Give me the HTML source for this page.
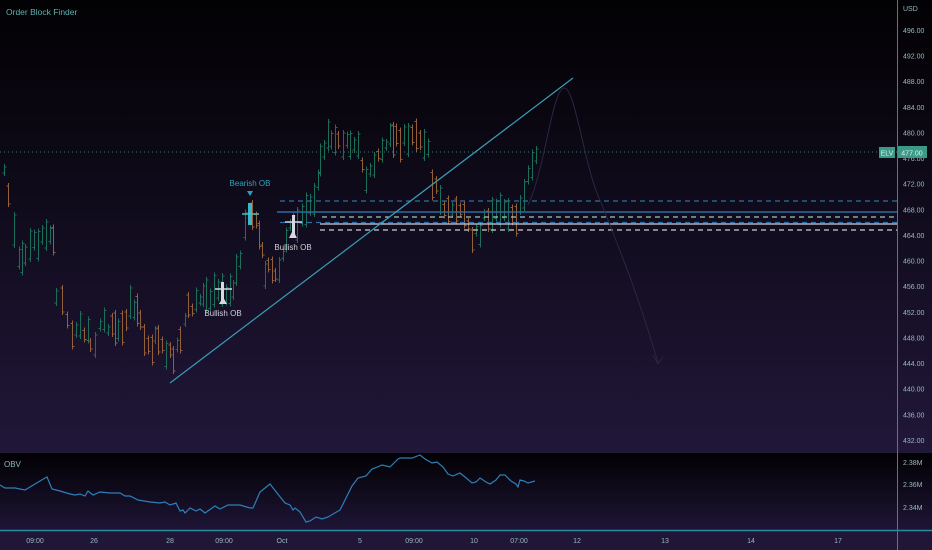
<!DOCTYPE html>
<html><head><meta charset="utf-8"><style>
html,body{margin:0;padding:0;width:932px;height:550px;overflow:hidden;background:#1f1638;font-family:"Liberation Sans",sans-serif}
svg{display:block}
</style></head><body>
<svg id="s" width="932" height="550" xmlns="http://www.w3.org/2000/svg">
<defs>
<linearGradient id="g1" x1="0" y1="0" x2="0" y2="1"><stop offset="0" stop-color="#020103"/><stop offset="1" stop-color="#211739"/></linearGradient>
<linearGradient id="g2" x1="0" y1="0" x2="0" y2="1"><stop offset="0" stop-color="#020103"/><stop offset="1" stop-color="#1e1536"/></linearGradient>
</defs>
<rect x="0" y="0" width="932" height="453" fill="url(#g1)"/>
<rect x="0" y="453" width="932" height="77" fill="url(#g2)"/>
<rect x="0" y="530" width="932" height="20" fill="#1f1638"/>
<line x1="0" y1="530.5" x2="932" y2="530.5" stroke="#2b8aa0" stroke-width="1.5"/>
<line x1="897.5" y1="0" x2="897.5" y2="550" stroke="#2b8aa0" stroke-width="1"/>
<text x="6" y="15" fill="#5fb3b0" font-size="8.5">Order Block Finder</text>
<text x="903" y="11" fill="#9ab8c0" font-size="7">USD</text>
<g id="axis" fill="#9ab8c0" font-size="7"></g>
<line x1="0" y1="152" x2="897" y2="152" stroke="#2a8a70" stroke-width="1" stroke-dasharray="1,3"/>
<g id="bars"></g>
<!-- zones -->
<line x1="280" y1="201" x2="897" y2="201" stroke="#2a6fa8" stroke-width="1.3" stroke-dasharray="5,4"/>
<line x1="277" y1="212" x2="897" y2="212" stroke="#2e6aa0" stroke-width="1.5"/>
<line x1="322" y1="217" x2="897" y2="217" stroke="#9ac8c0" stroke-width="1.2" stroke-dasharray="5,4"/>
<line x1="280" y1="222.5" x2="897" y2="222.5" stroke="#2a6fa8" stroke-width="1.2" stroke-dasharray="5,4"/>
<line x1="320" y1="224" x2="897" y2="224" stroke="#d0d0d8" stroke-width="1.3"/>
<line x1="320" y1="230" x2="897" y2="230" stroke="#c8d0d0" stroke-width="1.2" stroke-dasharray="5,4"/>
<line x1="170" y1="383" x2="573" y2="78" stroke="#3a9db8" stroke-width="1.2"/>
<path d="M528 205 C545 170,552 90,564 88 C575 86,585 170,600 200 C620 250,640 300,658 363 M653 355 L658 364 L663 357" fill="none" stroke="#2a2646" stroke-width="1"/>
<!-- OB markers -->
<text x="250" y="186" fill="#2aa3c0" font-size="8" text-anchor="middle">Bearish OB</text>
<path d="M247 191 L253 191 L250 196Z" fill="#2aa3c0"/>
<rect x="248" y="203" width="4" height="22" fill="#3ab8c8"/>
<line x1="242" y1="214" x2="259" y2="214" stroke="#4ac0c8" stroke-width="1.5"/>
<g fill="#d8d8e0" stroke="#d8d8e0">
<rect x="221" y="282" width="3" height="19" stroke="none"/>
<line x1="215" y1="289" x2="232" y2="289" stroke-width="1.5"/>
<path d="M219 304 L223 297 L227 304Z" stroke="none"/>
<rect x="292" y="215" width="3" height="19" stroke="none"/>
<line x1="285" y1="222" x2="302" y2="222" stroke-width="1.5"/>
<path d="M289 238 L293 230 L297 238Z" stroke="none"/>
</g>
<text x="223" y="316" fill="#d0d0d8" font-size="8" text-anchor="middle">Bullish OB</text>
<text x="293" y="250" fill="#d0d0d8" font-size="8" text-anchor="middle">Bullish OB</text>
<!-- price label -->
<rect x="879" y="147" width="16" height="11" fill="#3a9a88"/>
<text x="887" y="155.5" fill="#e0f0ea" font-size="7" text-anchor="middle">ELV</text>
<rect x="898" y="146" width="29" height="12" fill="#3a9a88"/>
<text x="912" y="155.5" fill="#e0f0ea" font-size="7" text-anchor="middle">477.00</text>
<!-- OBV -->
<text x="4" y="467" fill="#8ab8c0" font-size="8">OBV</text>
<text x="903" y="465" fill="#9ab8c0" font-size="7">2.38M</text>
<text x="903" y="487" fill="#9ab8c0" font-size="7">2.36M</text>
<text x="903" y="510" fill="#9ab8c0" font-size="7">2.34M</text>
<polyline fill="none" stroke="#2d7fb8" stroke-width="1.2" points="0,485 5,488 15,488 25,490 30,487 45,478 47,477 52,489 60,491 70,494 75,495 80,494 85,496 88,491 93,495 100,492 110,493 120,493 125,496 130,496 138,500 150,502 160,503 165,502 170,505 176,503 180,511 183,510 185,513 190,508 196,511 200,509 205,513 215,506 220,509 228,505 240,505 250,508 253,508 260,492 265,488 270,484 277,493 285,503 290,505 293,510 295,508 300,512 306,522 310,521 316,517 322,519 328,517 340,510 345,500 352,486 358,478 366,476 372,469 375,468 382,465 390,467 398,459 400,458 412,458 420,455 425,459 432,463 437,462 443,467 448,474 453,476 460,473 465,477 472,483 476,482 480,478 486,482 490,484 496,480 500,475 505,475 511,481 516,484 518,487 520,480 524,481 528,483 535,481"/>
<g fill="#9ab8c0" font-size="7" text-anchor="middle">
<text x="35" y="543">09:00</text><text x="94" y="543">26</text><text x="170" y="543">28</text><text x="224" y="543">09:00</text><text x="282" y="543">Oct</text><text x="360" y="543">5</text><text x="414" y="543">09:00</text><text x="474" y="543">10</text><text x="519" y="543">07:00</text><text x="577" y="543">12</text><text x="665" y="543">13</text><text x="751" y="543">14</text><text x="838" y="543">17</text>
</g>
</svg>
<script>
var ns="http://www.w3.org/2000/svg";
var ax=document.getElementById('axis');
for(var p=496;p>=432;p-=4){var y=30+(496-p)*6.406;if(Math.abs(y-152)<6)continue;var t=document.createElementNS(ns,'text');t.setAttribute('x',903);t.setAttribute('y',y+3);t.textContent=p.toFixed(2);ax.appendChild(t);}
var d="4:170g,8:195o,14:230g,19:258g,22:258g,25:255g,30:245g,34:240g,38:245g,42:235g,46:235g,50:235g,53:240o,56:297g,62:300o,67:320o,72:335o,76:330g,80:325g,84:335o,88:330g,90:345o,95:345g,100:325g,104:320g,108:330g,112:325o,115:328o,118:330g,122:328o,126:320o,130:302g,134:310g,137:310o,140:320o,144:340o,148:345o,152:350o,155:335g,158:340o,162:345o,166:355g,170:350o,173:360o,177:345g,180:340o,185:320g,188:305o,192:310o,196:300g,200:300g,203:295g,206:295g,210:300g,214:290g,218:290g,222:290g,226:295g,230:290g,233:290g,236:270g,240:260g,245:225g,249:212g,252:215o,256:220o,259:235o,262:250o,265:275g,268:265o,272:270o,275:275o,279:270g,283:255g,286:240g,290:225g,293:225g,297:225g,302:215g,306:210g,310:205g,314:200g,318:180g,320:160g,324:150g,328:135g,331:140g,335:140g,338:140o,343:145g,347:140g,350:145g,354:145g,358:145g,362:165o,366:180g,370:170g,374:165g,378:155o,382:150g,386:145g,390:135g,393:140o,396:135o,400:145o,404:135g,408:140g,412:135o,416:135o,420:140o,424:145g,428:148g,432:185o,436:185o,440:200g,444:210o,448:210o,452:210g,456:210o,460:210o,464:215o,468:225o,472:240o,476:230g,480:235g,484:215g,488:220o,492:215g,496:210g,500:210g,504:210g,508:215g,512:215o,516:220o,520:205g,524:195g,528:175g,532:165g,536:155g".split(',');
var bg=document.getElementById('bars');
d.forEach(function(s,i){var a=s.split(':');var x=+a[0]+0.5;var m=parseFloat(a[1]);var g=a[1].slice(-1)=='g';var c=g?'#1d6e58':'#94603a';var h=12+((i*37)%25);
var l=document.createElementNS(ns,'path');var y1=m-h/2,y2=m+h/2;var o=g?y2-3:y1+3,cl=g?y1+3:y2-3;
l.setAttribute('d','M'+x+' '+y1+'V'+y2+'M'+(x-2)+' '+o+'H'+x+'M'+x+' '+cl+'H'+(x+2));l.setAttribute('stroke',c);l.setAttribute('fill','none');l.setAttribute('stroke-width','1');bg.appendChild(l);});
</script>
</body></html>
